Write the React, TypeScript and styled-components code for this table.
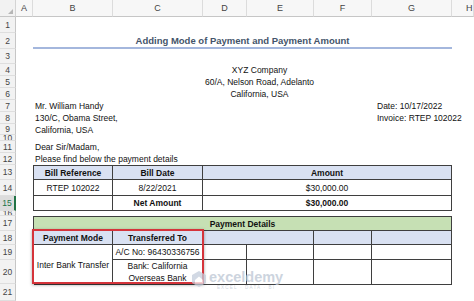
import React from 'react';
import styled, { createGlobalStyle } from 'styled-components';

const ROW_HEIGHTS = [17, 16, 16, 15, 12, 12, 12, 12, 12, 11, 6, 12, 12, 15, 16, 15, 5, 15, 14, 15, 24, 17];
const COLUMN_WIDTHS = [16, 17, 80, 90, 44, 67, 58, 80, 22];
const LETTERS = ['A', 'B', 'C', 'D', 'E', 'F', 'G', 'H'];
const ACTIVE_ROW = 15;

const GlobalStyle = createGlobalStyle`
  html, body {
    margin: 0;
    padding: 0;
    background: #fff;
    overflow: hidden;
  }
`;

const Sheet = styled.div`
  position: relative;
  display: grid;
  grid-template-columns: ${COLUMN_WIDTHS.map(w => `${w}px`).join(' ')};
  grid-template-rows: ${ROW_HEIGHTS.map(h => `${h}px`).join(' ')};
  width: 474px;
  height: 301px;
  overflow: hidden;
  background: #fff;
  font-family: "Liberation Sans", Arial, sans-serif;
  font-size: 8.5px;
  color: #111;
`;

const Corner = styled.div`
  grid-row: 1;
  grid-column: 1;
  position: relative;
  background: #f2f2f2;
  border-right: 1px solid #d4d4d4;
  border-bottom: 1px solid #c6c6c6;

  &::after {
    content: '';
    position: absolute;
    right: 2px;
    bottom: 2px;
    border-style: solid;
    border-width: 0 0 5px 5px;
    border-color: transparent transparent #b6b6b6 transparent;
  }
`;

const ColHeader = styled.div<{ $pad?: number }>`
  grid-row: 1;
  display: flex;
  align-items: center;
  justify-content: ${p => (p.$pad ? 'flex-start' : 'center')};
  padding-left: ${p => p.$pad ?? 0}px;
  background: #f7f7f7;
  border-right: 1px solid #dcdcdc;
  border-bottom: 1px solid #c6c6c6;
  color: #444;
  font-size: 9px;
`;

const RowHeader = styled.div<{ $row: number; $active?: boolean }>`
  grid-column: 1;
  grid-row: ${p => p.$row + 1};
  display: flex;
  align-items: center;
  justify-content: center;
  overflow: hidden;
  background: ${p => (p.$active ? '#dcdcdc' : '#f2f2f2')};
  color: ${p => (p.$active ? '#217346' : '#444')};
  border-right: ${p => (p.$active ? '2px solid #217346' : '1px solid #c6c6c6')};
  border-bottom: 1px solid #dedede;
  font-size: 8.5px;
  line-height: 10px;
`;

const Cell = styled.div<{ $row: number; $col: string; $center?: boolean; $indent?: number }>`
  grid-row: ${p => p.$row + 1};
  grid-column: ${p => p.$col};
  display: flex;
  align-items: center;
  justify-content: ${p => (p.$center ? 'center' : 'flex-start')};
  padding-left: ${p => p.$indent ?? 2}px;
  white-space: nowrap;
`;

const Title = styled.div`
  grid-row: 3;
  grid-column: 3 / 9;
  display: flex;
  align-items: center;
  justify-content: center;
  font-size: 9.5px;
  font-weight: 700;
  color: #44546a;
  border-bottom: 2px solid #a4b7dd;
`;

const Table = styled.div<{ $rows: string; $template: string }>`
  grid-row: ${p => p.$rows};
  grid-column: 3 / 9;
  display: grid;
  grid-template-columns: 79px 90px 44px 67px 58px 1fr;
  grid-template-rows: ${p => p.$template};
  border-top: 1px solid #3f3f3f;
  border-left: 1px solid #3f3f3f;
`;

const TCell = styled.div<{ $fill?: 'blue' | 'green'; $bold?: boolean; $span?: number; $rowSpan?: number }>`
  grid-column: span ${p => p.$span ?? 1};
  grid-row: span ${p => p.$rowSpan ?? 1};
  display: flex;
  align-items: center;
  justify-content: center;
  text-align: center;
  white-space: nowrap;
  line-height: 12px;
  font-weight: ${p => (p.$bold ? 700 : 400)};
  background: ${p => (p.$fill === 'blue' ? '#d9e1f2' : p.$fill === 'green' ? '#c6e0b4' : '#fff')};
  border-right: 1px solid #3f3f3f;
  border-bottom: 1px solid #3f3f3f;
`;

const Highlight = styled.div`
  grid-row: 19 / 22;
  grid-column: 3 / 5;
  margin: -2px -1px 0 -1px;
  border: 2px solid #d5343b;
  box-shadow: 0 1px 3px rgba(0, 0, 0, 0.35);
  pointer-events: none;
  z-index: 2;
`;

const Watermark = styled.div`
  position: absolute;
  left: 191px;
  top: 270px;
  display: flex;
  align-items: flex-start;
  gap: 2px;
  opacity: 0.75;
  z-index: 3;
`;

const Brand = styled.div`
  display: flex;
  flex-direction: column;
  align-items: center;
`;

const BrandName = styled.span`
  font-size: 14.5px;
  font-weight: 700;
  line-height: 15px;
  color: #bcc6d4;
`;

const BrandTag = styled.span`
  font-size: 4.5px;
  letter-spacing: 1.2px;
  color: #c3cbd6;
  line-height: 6px;
`;

const Logo = () => (
  <svg width="16" height="18" viewBox="0 0 16 18">
    <path d="M8 1 L15 5 V13 L8 17 L1 13 V5 Z" fill="#c4cddb" />
    <path d="M4 10 L8 6.5 L12 10 V13.5 H4 Z" fill="#fff" />
  </svg>
);

export default function App() {
  return (
    <>
      <GlobalStyle />
      <Sheet>
        <Corner />
        {LETTERS.map(l => (
          <ColHeader key={l} $pad={l === 'H' ? 14 : undefined}>
            {l}
          </ColHeader>
        ))}
        {ROW_HEIGHTS.slice(1).map((_, i) => (
          <RowHeader key={i} $row={i + 1} $active={i + 1 === ACTIVE_ROW}>
            {i + 1}
          </RowHeader>
        ))}

        <Title>Adding Mode of Payment and Payment Amount</Title>

        <Cell $row={4} $col="5 / 7" $center>XYZ Company</Cell>
        <Cell $row={5} $col="5 / 7" $center>60/A, Nelson Road, Adelanto</Cell>
        <Cell $row={6} $col="5 / 7" $center>California, USA</Cell>

        <Cell $row={7} $col="3 / 5">Mr. William Handy</Cell>
        <Cell $row={8} $col="3 / 5">130/C, Obama Street,</Cell>
        <Cell $row={9} $col="3 / 5">California, USA</Cell>
        <Cell $row={7} $col="8 / 10" $indent={5}>Date: 10/17/2022</Cell>
        <Cell $row={8} $col="8 / 10" $indent={5}>Invoice: RTEP 102022</Cell>

        <Cell $row={11} $col="3 / 6">Dear Sir/Madam,</Cell>
        <Cell $row={12} $col="3 / 6">Please find below the payment details</Cell>

        <Table $rows="14 / 17" $template="14px 16px 1fr">
          <TCell $fill="blue" $bold>Bill Reference</TCell>
          <TCell $fill="blue" $bold>Bill Date</TCell>
          <TCell $fill="blue" $bold $span={4}>Amount</TCell>
          <TCell>RTEP 102022</TCell>
          <TCell>8/22/2021</TCell>
          <TCell $span={4}>$30,000.00</TCell>
          <TCell />
          <TCell $bold>Net Amount</TCell>
          <TCell $bold $span={4}>$30,000.00</TCell>
        </Table>

        <Table $rows="18 / 22" $template="14px 14px 15px 1fr">
          <TCell $fill="green" $bold $span={6}>Payment Details</TCell>
          <TCell $fill="blue" $bold>Payment Mode</TCell>
          <TCell $fill="blue" $bold>Transferred To</TCell>
          <TCell $fill="blue" $span={2} />
          <TCell $fill="blue" />
          <TCell $fill="blue" />
          <TCell $rowSpan={2}>Inter Bank Transfer</TCell>
          <TCell>A/C No: 96430336756</TCell>
          <TCell />
          <TCell />
          <TCell />
          <TCell />
          <TCell>
            Bank: California
            <br />
            Overseas Bank
          </TCell>
          <TCell />
          <TCell />
          <TCell />
          <TCell />
        </Table>

        <Highlight />

        <Watermark>
          <Logo />
          <Brand>
            <BrandName>exceldemy</BrandName>
            <BrandTag>EXCEL · DATA · BI</BrandTag>
          </Brand>
        </Watermark>
      </Sheet>
    </>
  );
}
